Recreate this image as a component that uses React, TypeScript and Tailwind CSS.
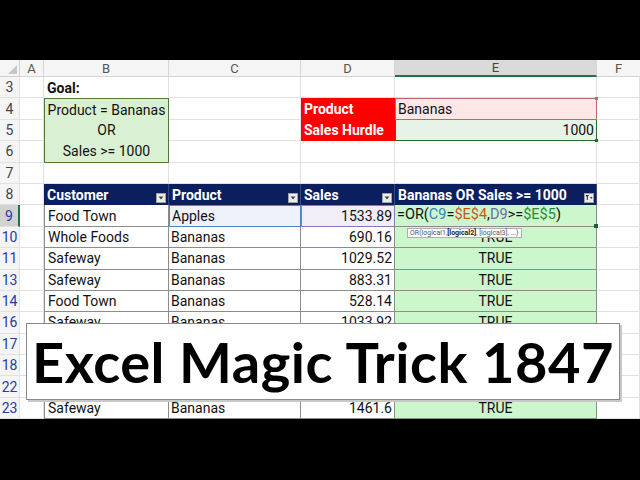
import React from "react";

const G = "border-r border-b border-[#e1e1e1]";
const T = "border-r border-b border-[#8c8c8c]";

function RowNum({ n, blue, active }: { n: string; blue?: boolean; active?: boolean }) {
  return (
    <div
      className={`flex items-center justify-center text-[14px] leading-none border-b border-r ${
        active ? "bg-[#d2d2d2] border-r-[#217346] border-r-2 border-b-[#e1e1e1]" : "bg-[#f5f5f5] border-[#e1e1e1]"
      } ${blue ? "text-[#2b3a9e]" : "text-[#444]"}`}
    >
      {n}
    </div>
  );
}

function Empty({ cls = G }: { cls?: string }) {
  return <div className={cls} />;
}

function FilterBtn({ funnel }: { funnel?: boolean }) {
  return (
    <div className="absolute right-[2px] bottom-[2px] w-[10px] h-[10px] bg-[#ececec] border border-[#a0a0a0] flex items-center justify-center">
      {funnel ? (
        <svg width="8" height="8" viewBox="0 0 8 8">
          <path d="M0.5 1 L4 1 L2.8 3 L2.8 6 L1.8 6 L1.8 3 Z" fill="#333" />
          <path d="M5 3 L7.5 3 L6.25 5 Z" fill="#333" />
        </svg>
      ) : (
        <svg width="6" height="4" viewBox="0 0 6 4">
          <path d="M0.5 0.5 L5.5 0.5 L3 3.5 Z" fill="#444" />
        </svg>
      )}
    </div>
  );
}

function HeadCell({ text, funnel }: { text: string; funnel?: boolean }) {
  return (
    <div className="relative bg-[#0b1f5e] border-r border-[#3a4a7e] flex items-center pl-[3px] text-white font-bold text-[14px] leading-none whitespace-nowrap">
      {text}
      <FilterBtn funnel={funnel} />
    </div>
  );
}

function DataRow({ n, cust, prod, sales, val = "TRUE" }: { n: string; cust: string; prod: string; sales: string; val?: string }) {
  return (
    <>
      <RowNum n={n} blue />
      <Empty />
      <div className={`${T} border-l border-l-[#8c8c8c] flex items-center pl-[3px] text-[14px] leading-none text-[#111]`}>{cust}</div>
      <div className={`${T} flex items-center pl-[2px] text-[14px] leading-none text-[#111]`}>{prod}</div>
      <div className={`${T} flex items-center justify-end pr-[2px] text-[14px] leading-none text-[#111]`}>{sales}</div>
      <div className={`${T} bg-[#ccf6cc] flex items-center justify-center text-[14px] leading-none text-[#111]`}>{val}</div>
      <Empty />
    </>
  );
}

export default function App() {
  const font = { fontFamily: "Roboto, 'Liberation Sans', sans-serif" };
  return (
    <div className="w-[640px] h-[480px] bg-black flex flex-col overflow-hidden" style={font}>
      <div className="h-[60px] shrink-0" />
      <div className="relative bg-white">
        <div className="grid grid-cols-[20px_24px_125px_132px_94px_202px_43px] grid-rows-[17px_repeat(16,21.4px)]">
          {/* Column headers */}
          <div className="bg-[#f5f5f5] border-r border-b border-[#d0d0d0] relative">
            <div className="absolute right-[2px] bottom-[2px] w-0 h-0 border-l-[9px] border-l-transparent border-b-[9px] border-b-[#c8c8c8]" />
          </div>
          {["A", "B", "C", "D"].map((c) => (
            <div key={c} className="bg-[#f5f5f5] border-r border-b border-[#d5d5d5] flex items-center justify-center text-[13px] text-[#555] leading-none">
              {c}
            </div>
          ))}
          <div className="bg-[#dadada] border-r border-[#d5d5d5] border-b-2 border-b-[#217346] flex items-center justify-center text-[13px] text-[#444] leading-none">
            E
          </div>
          <div className="bg-[#f5f5f5] border-b border-[#d5d5d5] flex items-center justify-center text-[13px] text-[#555] leading-none">
            F
          </div>

          {/* Row 3 */}
          <RowNum n="3" />
          <Empty />
          <div className="border-r border-[#e1e1e1] flex items-center pl-[3px] text-[14px] font-bold text-[#111] leading-none">Goal:</div>
          <Empty />
          <Empty />
          <Empty />
          <Empty />

          {/* Row 4 */}
          <RowNum n="4" />
          <Empty />
          <div className="row-span-3 bg-[#d9f1d2] border border-[#4e7a3c] flex flex-col text-[14px] text-[#111] leading-none">
            <div className="flex-1 flex items-center justify-center">Product = Bananas</div>
            <div className="flex-1 flex items-center justify-center">OR</div>
            <div className="flex-1 flex items-center justify-center">Sales &gt;= 1000</div>
          </div>
          <Empty />
          <div className="bg-[#ff0000] flex items-center pl-[3px] text-white font-bold text-[14px] leading-none">Product</div>
          <div className="relative bg-[#fde7e7] border border-[#b26c6c] flex items-center pl-[2px] text-[14px] text-[#111] leading-none">
            Bananas
            <div className="absolute -right-[2px] -top-[2px] w-[3px] h-[3px] bg-[#b26c6c]" />
          </div>
          <Empty />

          {/* Row 5 */}
          <RowNum n="5" />
          <Empty />
          <Empty />
          <div className="bg-[#ff0000] flex items-center pl-[3px] text-white font-bold text-[14px] leading-none">Sales Hurdle</div>
          <div className="relative bg-[#e7f3e6] border border-[#2d6a2d] border-t-0 flex items-center justify-end pr-[2px] text-[14px] text-[#111] leading-none">
            1000
            <div className="absolute -right-[2px] -bottom-[2px] w-[3px] h-[3px] bg-[#2d6a2d]" />
          </div>
          <Empty />

          {/* Row 6 */}
          <RowNum n="6" />
          <Empty />
          <Empty />
          <Empty />
          <Empty />
          <Empty />

          {/* Row 7 */}
          <RowNum n="7" />
          <Empty />
          <Empty />
          <Empty />
          <Empty />
          <Empty />
          <Empty />

          {/* Row 8 header */}
          <RowNum n="8" />
          <Empty />
          <HeadCell text="Customer" />
          <HeadCell text="Product" />
          <HeadCell text="Sales" />
          <HeadCell text="Bananas OR Sales >= 1000" funnel />
          <Empty />

          {/* Row 9 */}
          <RowNum n="9" blue active />
          <Empty />
          <div className={`${T} border-l border-l-[#8c8c8c] flex items-center pl-[3px] text-[14px] leading-none text-[#111]`}>Food Town</div>
          <div className="bg-[#eef3fb] border border-[#4f86c6] flex items-center pl-[2px] text-[14px] leading-none text-[#111]">Apples</div>
          <div className="bg-[#f2eef8] border border-[#8a78b0] flex items-center justify-end pr-[2px] text-[14px] leading-none text-[#111]">1533.89</div>
          <div className="relative bg-[#ccf6cc] border-b border-r border-[#8c8c8c] flex items-center pl-[2px] text-[14.5px] leading-none text-[#111] whitespace-nowrap">
            =OR(<span className="text-[#3a7fc0]">C9</span>=<span className="text-[#c45a1e]">$E$4</span>,<span className="text-[#6f6aae]">D9</span>&gt;=<span className="text-[#2e8a34]">$E$5</span>)
            <div className="absolute -right-[2px] -bottom-[2px] w-[4px] h-[4px] bg-[#1e5e34]" />
          </div>
          <Empty />

          <DataRow n="10" cust="Whole Foods" prod="Bananas" sales="690.16" />
          <DataRow n="11" cust="Safeway" prod="Bananas" sales="1029.52" />
          <DataRow n="13" cust="Safeway" prod="Bananas" sales="883.31" />
          <DataRow n="14" cust="Food Town" prod="Bananas" sales="528.14" />
          <DataRow n="16" cust="Safeway" prod="Bananas" sales="1033.92" />
          <DataRow n="17" cust="" prod="" sales="" val="" />
          <DataRow n="18" cust="" prod="" sales="" val="" />
          <DataRow n="22" cust="" prod="" sales="" val="" />
          <DataRow n="23" cust="Safeway" prod="Bananas" sales="1461.6" />
        </div>

        {/* function tooltip */}
        <div className="absolute left-[407px] top-[168px] h-[10px] px-[2px] bg-white border border-[#b0b0b0] flex items-center text-[7px] leading-none text-[#555] whitespace-nowrap">
          OR(logical1, <span className="font-bold text-[#222]">[logical2]</span>, [logical3], ...)
        </div>

        {/* title overlay */}
        <div className="absolute left-[26px] top-[263px] w-[594px] h-[77px] bg-white border border-[#8a8a8a] shadow-[2px_2px_0_#c8c8c8] flex items-center justify-center">
          <span
            className="text-[56px] font-bold text-black leading-none tracking-[0.5px]"
            style={{ fontFamily: "Lato, 'Open Sans', sans-serif" }}
          >
            Excel Magic Trick 1847
          </span>
        </div>
      </div>
      <div className="flex-1" />
    </div>
  );
}
